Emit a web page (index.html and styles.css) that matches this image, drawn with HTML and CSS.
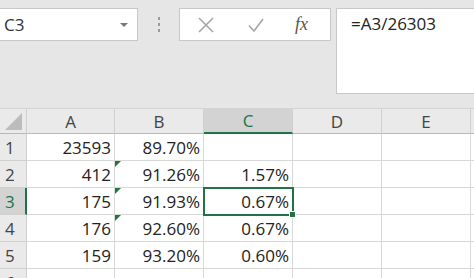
FILE: index.html
```html
<!DOCTYPE html>
<html lang="en">

<head>
    <meta charset="UTF-8">
    <title>Sheet</title>
    <link rel="stylesheet" href="styles.css">
</head>

<body>
    <div class="toolbar">
        <div class="namebox">
            <span>C3</span>
            <span class="caret"></span>
        </div>
        <div class="grip">
            <span></span><span></span><span></span>
        </div>
        <div class="buttons">
            <svg class="btn" width="18" height="18" viewBox="0 0 18 18">
                <path d="M2 2 L16 16 M16 2 L2 16" stroke="#a6a6a6" stroke-width="1.6" fill="none"/>
            </svg>
            <svg class="btn" width="18" height="18" viewBox="0 0 18 18">
                <path d="M2 9.5 L7 15 L16 3" stroke="#a6a6a6" stroke-width="1.6" fill="none"/>
            </svg>
            <span class="fx">fx</span>
        </div>
        <div class="formula">=A3/26303</div>
    </div>

    <div class="sheet">
        <div class="hd corner"><span class="tri"></span></div>
        <div class="hd col">A</div>
        <div class="hd col">B</div>
        <div class="hd col active">C</div>
        <div class="hd col">D</div>
        <div class="hd col">E</div>
        <div class="hd col"></div>

        <div class="hd row">1</div>
        <div class="cell">23593</div>
        <div class="cell">89.70%</div>
        <div class="cell"></div>
        <div class="cell"></div>
        <div class="cell"></div>
        <div class="cell"></div>

        <div class="hd row">2</div>
        <div class="cell">412</div>
        <div class="cell flag">91.26%</div>
        <div class="cell">1.57%</div>
        <div class="cell"></div>
        <div class="cell"></div>
        <div class="cell"></div>

        <div class="hd row active">3</div>
        <div class="cell">175</div>
        <div class="cell flag">91.93%</div>
        <div class="cell selected">0.67%<span class="handle"></span></div>
        <div class="cell"></div>
        <div class="cell"></div>
        <div class="cell"></div>

        <div class="hd row">4</div>
        <div class="cell">176</div>
        <div class="cell flag">92.60%</div>
        <div class="cell">0.67%</div>
        <div class="cell"></div>
        <div class="cell"></div>
        <div class="cell"></div>

        <div class="hd row">5</div>
        <div class="cell">159</div>
        <div class="cell">93.20%</div>
        <div class="cell">0.60%</div>
        <div class="cell"></div>
        <div class="cell"></div>
        <div class="cell"></div>

        <div class="hd row">6</div>
        <div class="cell"></div>
        <div class="cell"></div>
        <div class="cell"></div>
        <div class="cell"></div>
        <div class="cell"></div>
        <div class="cell"></div>
    </div>
</body>

</html>
```

FILE: styles.css
```css
body {
    margin: 0;
    width: 474px;
    height: 278px;
    overflow: hidden;
    font-family: "Open Sans", "Liberation Sans", sans-serif;
    color: #222;
    background-color: #fff;
}

.toolbar {
    display: flex;
    align-items: flex-start;
    height: 100px;
    padding-top: 8px;
    background-color: #e6e6e6;
}

.namebox {
    box-sizing: border-box;
    width: 139px;
    height: 33px;
    margin-left: -1px;
    padding: 0 9px 0 4px;
    display: flex;
    align-items: center;
    justify-content: space-between;
    background-color: #fff;
    border: 1px solid #c8c8c8;
    font-size: 17px;
    color: #333;
}

.caret {
    width: 0;
    height: 0;
    border-left: 4px solid transparent;
    border-right: 4px solid transparent;
    border-top: 4px solid #777;
}

.grip {
    width: 41px;
    height: 33px;
    display: flex;
    flex-direction: column;
    align-items: center;
    justify-content: center;
    gap: 3px;
}

.grip span {
    width: 2px;
    height: 3px;
    background-color: #9a9a9a;
}

.buttons {
    box-sizing: border-box;
    width: 152px;
    height: 33px;
    padding-left: 17px;
    display: flex;
    align-items: center;
    background-color: #fff;
    border: 1px solid #c8c8c8;
}

.btn {
    margin-right: 32px;
}

.fx {
    font-family: "Liberation Serif", serif;
    font-style: italic;
    font-size: 18px;
    color: #555;
    margin-left: -2px;
}

.formula {
    box-sizing: border-box;
    flex: 1;
    height: 86px;
    margin-left: 5px;
    margin-right: -2px;
    padding: 3px 0 0 14px;
    background-color: #fff;
    border: 1px solid #c8c8c8;
    font-size: 17px;
    color: #222;
}

.sheet {
    display: grid;
    grid-template-columns: 27px 88px 89px 89px 89px 89px 1fr;
    grid-template-rows: 25px repeat(6, 27px);
    border-top: 1px solid #d4d4d4;
}

.hd {
    box-sizing: border-box;
    background-color: #eaeaea;
    color: #444;
    font-size: 17px;
    border-right: 1px solid #d0d0d0;
    border-bottom: 1px solid #d0d0d0;
}

.col {
    display: flex;
    align-items: center;
    justify-content: center;
    border-bottom-color: #b8b8b8;
}

.col.active {
    background-color: #d3d3d3;
    color: #217346;
    border-bottom: 2px solid #217346;
}

.corner {
    position: relative;
    border-bottom-color: #b8b8b8;
}

.tri {
    position: absolute;
    right: 4px;
    bottom: 3px;
    width: 17px;
    height: 17px;
    background-color: #bcbcbc;
    clip-path: polygon(100% 0, 100% 100%, 0 100%);
}

.row {
    display: flex;
    align-items: center;
    padding-left: 5px;
    line-height: 1;
}

.row.active {
    background-color: #d3d3d3;
    color: #217346;
    border-right: 2px solid #217346;
}

.cell {
    position: relative;
    box-sizing: border-box;
    display: flex;
    align-items: center;
    justify-content: flex-end;
    padding-right: 3px;
    font-size: 17px;
    border-right: 1px solid #d8d8d8;
    border-bottom: 1px solid #d8d8d8;
}

.flag::before {
    content: "";
    position: absolute;
    left: 0;
    top: 0;
    width: 6px;
    height: 6px;
    background-color: #1e7b34;
    clip-path: polygon(0 0, 100% 0, 0 100%);
}

.selected {
    outline: 2px solid #217346;
    outline-offset: -1px;
    z-index: 1;
}

.handle {
    position: absolute;
    right: -4px;
    bottom: -4px;
    width: 5px;
    height: 5px;
    background-color: #217346;
    border: 1px solid #fff;
}
```
